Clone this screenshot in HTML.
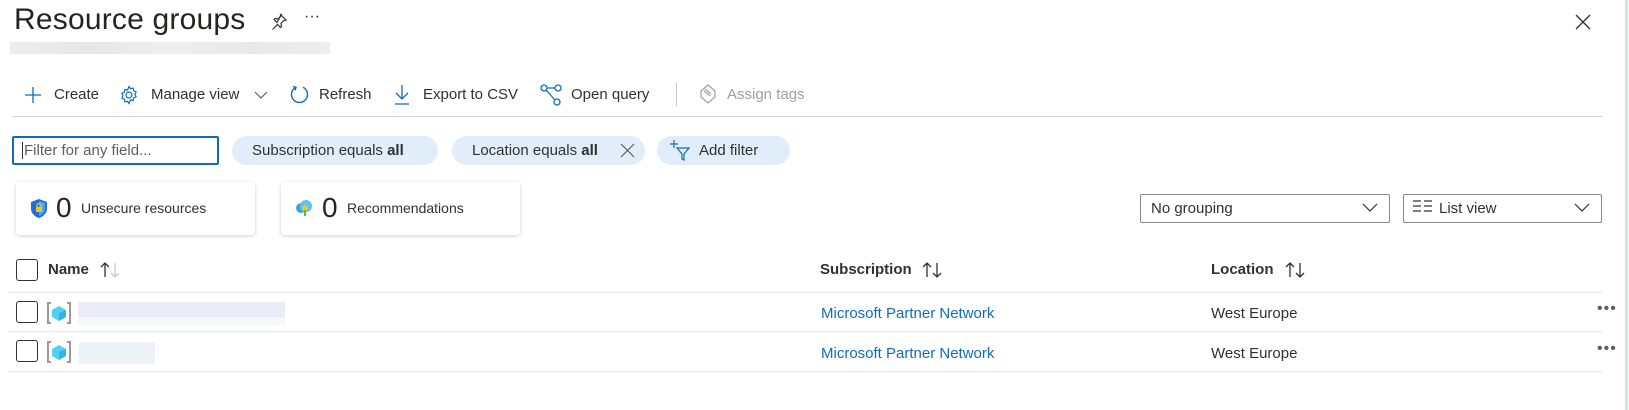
<!DOCTYPE html>
<html><head><meta charset="utf-8"><style>
*{margin:0;padding:0;box-sizing:border-box}
body{width:1629px;height:410px;background:#fff;position:relative;overflow:hidden;font-family:"Liberation Sans",sans-serif;color:#323130;font-size:15px}
.a{position:absolute;white-space:nowrap}
.ti{font-size:30px;left:14px;top:3px;color:#252423;letter-spacing:0.2px}
.tb{top:85px;font-size:15px;line-height:20px}
.ic{position:absolute}
.pill{position:absolute;top:136px;height:29px;border-radius:15px;background:#e1eefa;font-size:15px;line-height:29px;padding-left:20px}
.card{position:absolute;top:182px;height:53px;border-radius:4px;background:#fff;box-shadow:0 1px 4px rgba(0,0,0,.18)}
.dd{position:absolute;top:194px;height:29px;border:1px solid #8a8886;border-radius:2px;font-size:15px;line-height:27px;padding-left:10px}
.cb{position:absolute;left:16px;width:22px;height:22px;border:1.5px solid #323130;border-radius:3px}
.hl{position:absolute;left:8px;width:1595px;height:1px;background:#e6e6e6}
.lnk{color:#0f6cbd}
.srt{position:absolute;top:257px;font-size:19px;line-height:22px}
</style></head><body>
<div class="a ti">Resource groups</div>
<svg class="ic" style="left:270px;top:12px" width="18" height="18" viewBox="0 0 18 18" fill="none" stroke="#323130" stroke-width="1.2"><path d="M10 2l6 6-2 .5-3 3 .5 3-1 1-3-3-5 5M7 10.5l-3-3 1-1 3 .5 3-3 .5-2z"/></svg>
<div class="a" style="left:304px;top:8px;font-size:16px">···</div>
<svg class="ic" style="left:1575px;top:14px" width="16" height="16" stroke="#323130" stroke-width="1.3"><path d="M1 1l14 14M15 1L1 15"/></svg>
<div class="a" style="left:10px;top:42px;width:320px;height:12px;background:linear-gradient(90deg,#eee,#e6e6e6,#efefef,#e8e8e8,#eee)"></div>

<svg class="ic" style="left:24px;top:86px" width="18" height="18" stroke="#0f6cbd" stroke-width="1.3"><path d="M9 1v16M1 9h16"/></svg>
<div class="a tb" style="left:54px">Create</div>
<svg class="ic" style="left:119px;top:85px" width="20" height="20" viewBox="0 0 20 20" fill="none" stroke="#0f6cbd" stroke-width="1.2"><circle cx="10" cy="10" r="3"/><path d="M10 1.5l1.5 2.2 2.6-.6.6 2.6 2.4 1.2-1.1 2.4 1.1 2.4-2.4 1.2-.6 2.6-2.6-.6L10 18.5l-1.5-2.2-2.6.6-.6-2.6-2.4-1.2L4 10.7 2.9 8.3l2.4-1.2.6-2.6 2.6.6z"/></svg>
<div class="a tb" style="left:151px">Manage view</div>
<svg class="ic" style="left:254px;top:90px" width="14" height="10" fill="none" stroke="#605e5c" stroke-width="1.2"><path d="M1 2l6 6 6-6"/></svg>
<svg class="ic" style="left:289px;top:84px" width="21" height="21" viewBox="0 0 21 21" fill="none" stroke="#0f6cbd" stroke-width="1.4"><path d="M7 3.2A8 8 0 1 0 14 3.2M4 2.5l3 .8-1 3"/></svg>
<div class="a tb" style="left:319px">Refresh</div>
<svg class="ic" style="left:394px;top:84px" width="16" height="21" fill="none" stroke="#0f6cbd" stroke-width="1.3"><path d="M8 1v14M2 9l6 6 6-6M1 20h14"/></svg>
<div class="a tb" style="left:423px">Export to CSV</div>
<svg class="ic" style="left:540px;top:84px" width="22" height="22" fill="none" stroke="#0f6cbd" stroke-width="1.3"><circle cx="4" cy="4" r="3"/><circle cx="18" cy="4" r="3"/><circle cx="17" cy="18" r="3"/><path d="M6 6l9 10M15 4H7"/></svg>
<div class="a tb" style="left:571px">Open query</div>
<div class="a" style="left:676px;top:83px;width:1px;height:23px;background:#c8c6c4"></div>
<svg class="ic" style="left:699px;top:84px" width="18" height="20" fill="none" stroke="#a19f9d" stroke-width="1.2"><path d="M9 1l7 6v6l-7 6-7-6V7zM5 7l6 5M6 5l6 5"/></svg>
<div class="a tb" style="left:727px;color:#a19f9d">Assign tags</div>
<div class="a" style="left:12px;top:116px;width:1590px;height:1px;background:#d2d0ce"></div>

<div class="a" style="left:12px;top:136px;width:207px;height:29px;border:2px solid #0f6cbd;border-radius:2px;font-size:15px;line-height:25px;padding-left:8px;color:#605e5c"><span style="border-left:1.5px solid #323130;padding-left:1px">Filter for any field...</span></div>
<div class="pill" style="left:232px;width:206px">Subscription equals <b>all</b></div>
<div class="pill" style="left:452px;width:193px">Location equals <b>all</b></div>
<svg class="ic" style="left:620px;top:143px" width="15" height="15" stroke="#605e5c" stroke-width="1.2"><path d="M1 1l13 13M14 1L1 14"/></svg>
<div class="pill" style="left:657px;width:133px;padding-left:42px">Add filter</div>
<svg class="ic" style="left:670px;top:139px" width="20" height="22" fill="none" stroke="#0f6cbd" stroke-width="1.2"><path d="M4 1v8M0 5h8M7 9h12l-5 6v6l-2-1v-5z"/></svg>

<div class="card" style="left:16px;width:239px"></div>
<svg class="ic" style="left:31px;top:199px" width="16" height="19" viewBox="0 0 16 19"><path d="M8 0l8 3v7c0 4-4 8-8 9-4-1-8-5-8-9V3z" fill="#1f6fd6"/><path d="M8 2l6 2v6c0 3-3 6-6 7z" fill="#4da3f0"/><rect x="5" y="8" width="6" height="5" fill="#f5c518"/><path d="M6 8V6.5a2 2 0 0 1 4 0V8" fill="none" stroke="#f5c518" stroke-width="1.2"/></svg>
<div class="a" style="left:56px;top:192px;font-size:28px;color:#252423">0</div>
<div class="a" style="left:81px;top:200px;font-size:14px">Unsecure resources</div>
<div class="card" style="left:281px;width:239px"></div>
<svg class="ic" style="left:294px;top:198px" width="20" height="20" viewBox="0 0 20 20"><circle cx="7" cy="10" r="5" fill="#32a7e8"/><circle cx="12" cy="8" r="6" fill="#5cc3f2"/><circle cx="11" cy="10" r="3" fill="#f7c21c"/><rect x="10" y="12" width="2" height="6" fill="#5dbb46"/></svg>
<div class="a" style="left:322px;top:192px;font-size:28px;color:#252423">0</div>
<div class="a" style="left:347px;top:200px;font-size:14px">Recommendations</div>

<div class="dd" style="left:1140px;width:250px">No grouping</div>
<svg class="ic" style="left:1362px;top:203px" width="16" height="10" fill="none" stroke="#323130" stroke-width="1.2"><path d="M1 1l7 7 7-7"/></svg>
<div class="dd" style="left:1403px;width:199px;padding-left:35px">List view</div>
<svg class="ic" style="left:1413px;top:200px" width="20" height="12" stroke="#323130" stroke-width="1.2"><path d="M0 1h8M0 6h8M0 11h8M11 1h8M11 6h8M11 11h8"/></svg>
<svg class="ic" style="left:1574px;top:203px" width="16" height="10" fill="none" stroke="#323130" stroke-width="1.2"><path d="M1 1l7 7 7-7"/></svg>

<div class="cb" style="top:259px"></div>
<div class="a" style="left:48px;top:261px;font-weight:bold;font-size:15px">Name</div>
<svg class="ic" style="left:100px;top:261px" width="22" height="18" fill="none" stroke-width="1.3"><path d="M5 16V2M1 6l4-4 4 4" stroke="#323130"/><path d="M15 2v14M11 12l4 4 4-4" stroke="#c8c6c4"/></svg>
<div class="a" style="left:820px;top:261px;font-weight:bold;font-size:15px">Subscription</div>
<svg class="ic" style="left:922px;top:261px" width="22" height="18" fill="none" stroke="#323130" stroke-width="1.3"><path d="M5 16V2M1 6l4-4 4 4M15 2v14M11 12l4 4 4-4"/></svg>
<div class="a" style="left:1211px;top:261px;font-weight:bold;font-size:15px">Location</div>
<svg class="ic" style="left:1285px;top:261px" width="22" height="18" fill="none" stroke="#323130" stroke-width="1.3"><path d="M5 16V2M1 6l4-4 4 4M15 2v14M11 12l4 4 4-4"/></svg>
<div class="hl" style="top:292px"></div>

<div class="cb" style="top:301px"></div>
<svg class="ic" style="left:47px;top:302px" width="24" height="22" viewBox="0 0 24 22"><path d="M4 1H1v20h3M20 1h3v20h-3" fill="none" stroke="#9a9a9a" stroke-width="2"/><path d="M12 4l7 4v7l-7 4-7-4V8z" fill="#50d0f5"/><path d="M12 11l7-3v7l-7 4z" fill="#32b4e4"/></svg>
<div class="a" style="left:78px;top:302px;width:207px;height:15px;background:#e8ecf6"></div>
<div class="a" style="left:78px;top:317px;width:207px;height:8px;background:#f5f7fb"></div>
<div class="a lnk" style="left:821px;top:305px">Microsoft Partner Network</div>
<div class="a" style="left:1211px;top:305px">West Europe</div>
<div class="a" style="left:1597px;top:300px;font-size:16px;letter-spacing:1px;color:#605e5c">•••</div>
<div class="hl" style="top:331px"></div>

<div class="cb" style="top:340px"></div>
<svg class="ic" style="left:47px;top:341px" width="24" height="22" viewBox="0 0 24 22"><path d="M4 1H1v20h3M20 1h3v20h-3" fill="none" stroke="#9a9a9a" stroke-width="2"/><path d="M12 4l7 4v7l-7 4-7-4V8z" fill="#50d0f5"/><path d="M12 11l7-3v7l-7 4z" fill="#32b4e4"/></svg>
<div class="a" style="left:79px;top:342px;width:76px;height:22px;background:#eef1f8"></div>
<div class="a lnk" style="left:821px;top:345px">Microsoft Partner Network</div>
<div class="a" style="left:1211px;top:345px">West Europe</div>
<div class="a" style="left:1597px;top:340px;font-size:16px;letter-spacing:1px;color:#605e5c">•••</div>
<div class="hl" style="top:371px"></div>

<div class="a" style="left:1625px;top:0;width:3px;height:410px;background:#cfe6da"></div>
</body></html>
